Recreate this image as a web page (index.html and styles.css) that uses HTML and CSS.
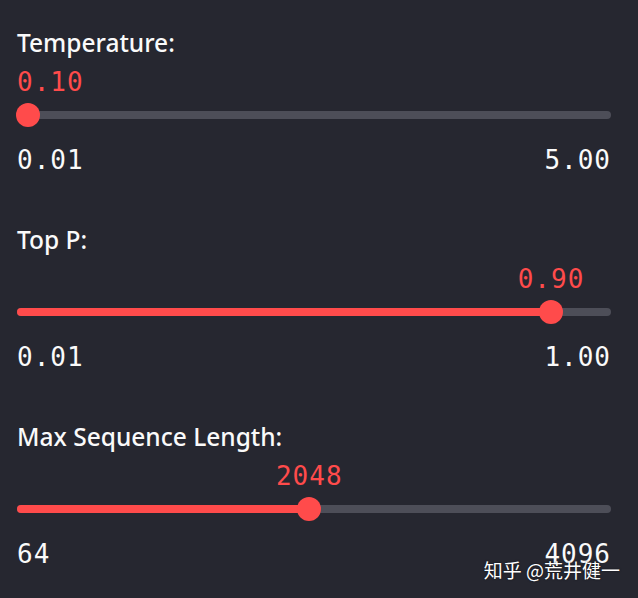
FILE: index.html
```html
<!DOCTYPE html>
<html lang="en">

<head>
    <meta charset="UTF-8">
    <meta name="viewport" content="width=device-width, initial-scale=1.0">
    <title>Model Settings</title>
    <link rel="stylesheet" href="styles.css">
</head>

<body>
    <div class="container">
        <div class="slider-block">
            <div class="slider-label">Temperature:</div>
            <div class="value-row">
                <span class="slider-value at-start">0.10</span>
            </div>
            <div class="track">
                <div class="track-fill" style="width: 1.8%"></div>
                <div class="thumb" style="left: 1.8%"></div>
            </div>
            <div class="range-row">
                <span>0.01</span>
                <span>5.00</span>
            </div>
        </div>

        <div class="slider-block">
            <div class="slider-label">Top P:</div>
            <div class="value-row">
                <span class="slider-value" style="left: 89.9%">0.90</span>
            </div>
            <div class="track">
                <div class="track-fill" style="width: 89.9%"></div>
                <div class="thumb" style="left: 89.9%"></div>
            </div>
            <div class="range-row">
                <span>0.01</span>
                <span>1.00</span>
            </div>
        </div>

        <div class="slider-block">
            <div class="slider-label">Max Sequence Length:</div>
            <div class="value-row">
                <span class="slider-value" style="left: 49.2%">2048</span>
            </div>
            <div class="track">
                <div class="track-fill" style="width: 49.2%"></div>
                <div class="thumb" style="left: 49.2%"></div>
            </div>
            <div class="range-row">
                <span>64</span>
                <span>4096</span>
            </div>
        </div>
    </div>

    <div class="watermark">知乎 @荒井健一</div>
</body>

</html>
```

FILE: styles.css
```css
:root {
    --background-color: #262730;
    --text-color: #fafafa;
    --accent-color: #ff4b4b;
    --track-color: #4d4e58;
}

body {
    margin: 0;
    padding: 0;
    background-color: var(--background-color);
    color: var(--text-color);
    font-family: 'Noto Sans', 'Open Sans', sans-serif;
    min-height: 100vh;
    overflow: hidden;
}

.container {
    padding: 28px 27px 0 17px;
}

.slider-block {
    margin-bottom: 50px;
}

.slider-label {
    font-size: 24.5px;
    line-height: 30px;
    font-weight: 500;
}

.value-row {
    position: relative;
    height: 30px;
    margin-top: 9px;
}

.slider-value {
    position: absolute;
    top: 0;
    transform: translateX(-50%);
    font-family: 'DejaVu Sans Mono', monospace;
    font-size: 26px;
    line-height: 30px;
    letter-spacing: 1px;
    color: var(--accent-color);
    white-space: nowrap;
}

.slider-value.at-start {
    left: 0;
    transform: none;
}

.track {
    position: relative;
    height: 8px;
    margin-top: 14px;
    background-color: var(--track-color);
    border-radius: 4px;
}

.track-fill {
    height: 100%;
    background-color: var(--accent-color);
    border-radius: 4px;
}

.thumb {
    position: absolute;
    top: 50%;
    width: 24px;
    height: 24px;
    border-radius: 50%;
    background-color: var(--accent-color);
    transform: translate(-50%, -50%);
}

.range-row {
    display: flex;
    justify-content: space-between;
    margin-top: 26px;
    font-family: 'DejaVu Sans Mono', monospace;
    font-size: 26px;
    line-height: 30px;
    letter-spacing: 1px;
}

.watermark {
    position: absolute;
    right: 18px;
    bottom: 15px;
    font-family: 'Noto Sans CJK SC', sans-serif;
    font-size: 19px;
    color: #ffffff;
    text-shadow: 0 0 2px rgba(0, 0, 0, 0.6);
}
```
